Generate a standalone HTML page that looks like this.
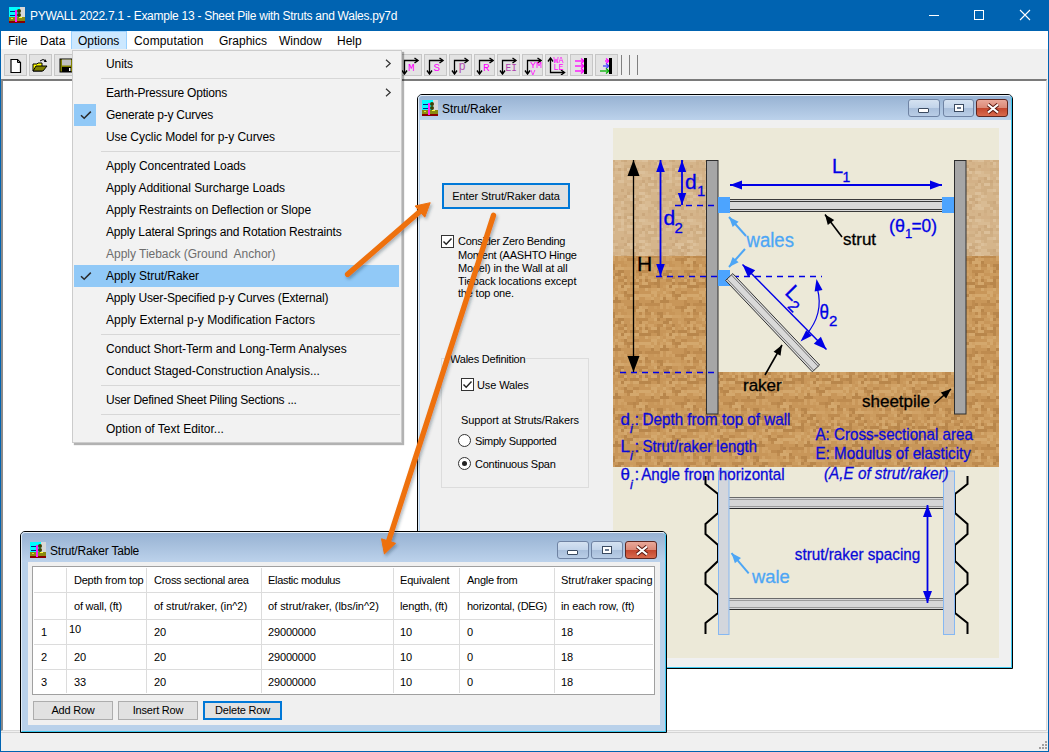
<!DOCTYPE html>
<html><head><meta charset="utf-8">
<style>
*{margin:0;padding:0;box-sizing:border-box}
html,body{width:1049px;height:752px;overflow:hidden;background:#F0F0F0;font-family:"Liberation Sans",sans-serif;color:#000}
.a{position:absolute}
.nw{white-space:nowrap}
#title{left:0;top:0;width:1049px;height:31px;background:#0063B1;color:#fff;font-size:12px}
#menubar{left:1px;top:31px;width:1047px;height:18px;background:#fff;font-size:12px}
#menubar span{position:absolute;top:3px;white-space:nowrap}
#toolbar{left:1px;top:49px;width:1047px;height:30px;background:#F0F0F0}
.tb{position:absolute;top:54px;width:23px;height:22px;border:1px solid #C6C6C6;background:#E3E3E3;overflow:hidden}
#mdi{left:1px;top:79px;width:1046px;height:652px;background:#fff;border-top:2px solid #7A7A7A;border-left:2px solid #8A8A8A;border-right:1px solid #DADADA;border-bottom:1px solid #DADADA}
#status{left:1px;top:732px;width:1047px;height:19px;background:#F0F0F0;border-top:1px solid #D4D4D4}
.win{position:absolute;border:1px solid #000;border-radius:5px 5px 0 0;background:#B9D1EA;overflow:hidden}
.wtitle{position:absolute;left:0;right:0;top:0;background:linear-gradient(#96B1D2,#BCD2EB);}
.wt{position:absolute;font-size:12px;color:#000;white-space:nowrap}
.wbtn{position:absolute;height:18px;border:1px solid #6F83A3;border-radius:3px;background:linear-gradient(#D5E2F1 0%,#C2D4EA 48%,#A9BFDB 52%,#B9CDE6 100%)}
.wclose{border-color:#5E2620;background:linear-gradient(#E9A89A 0%,#DC8A78 48%,#C4472E 52%,#D86A4E 100%)}
.menu{left:71px;top:50px;width:331px;height:393px;background:#F2F2F2;border:1px solid #CCCCCC;box-shadow:2px 2px 1px rgba(0,0,0,0.30);font-size:12px}
.mi{position:absolute;left:34px;height:22px;line-height:22px;white-space:nowrap;color:#000}
.sep{position:absolute;left:29px;width:297px;height:1px;background:#D7D7D7}
.dlg{font-size:11px}
.btn{position:absolute;background:#E1E1E1;border:1px solid #ADADAD;text-align:center;font-size:11px;white-space:nowrap}
.cb{position:absolute;width:13px;height:13px;border:1px solid #333;background:#fff}
.rb{position:absolute;width:13px;height:13px;border:1px solid #333;border-radius:50%;background:#fff}
.tbl td{}
</style></head><body>
<svg width="0" height="0" style="position:absolute">
<defs>
<symbol id="appicon" viewBox="0 0 16 16">
<rect x="0" y="0" width="16" height="16" fill="#C8C8C8"/>
<rect x="0" y="0" width="11" height="10" fill="#00FFFF"/>
<rect x="11" y="0" width="5" height="11" fill="#D8D8D8"/>
<rect x="1" y="4" width="6" height="1" fill="#00208A"/>
<rect x="1" y="8" width="6" height="1" fill="#00208A"/>
<rect x="0" y="10" width="16" height="4" fill="#8A8A10"/>
<rect x="2" y="11" width="2" height="1" fill="#E0E040"/>
<rect x="10" y="10" width="3" height="1" fill="#FFFF40"/>
<rect x="0" y="14" width="16" height="2" fill="#8A0000"/>
<circle cx="10" cy="4" r="2" fill="#404000"/>
<circle cx="10" cy="8" r="2" fill="#404000"/>
<rect x="6" y="3" width="2" height="12" fill="#FF20FF"/>
</symbol>
</defs>
</svg>
<div class="a" style="left:0;top:0;width:1049px;height:752px;background:#0063B1"></div>
<div class="a" style="left:1px;top:31px;width:1047px;height:720px;background:#F0F0F0"></div>
<div id="title" class="a">
  <svg class="a" style="left:9px;top:7px" width="16" height="16"><use href="#appicon"/></svg>
  <div class="a nw" style="left:30px;top:9px;letter-spacing:-0.27px">PYWALL 2022.7.1 - Example 13 - Sheet Pile with Struts and Wales.py7d</div>
  <div class="a" style="left:929px;top:15px;width:10px;height:1px;background:#fff"></div>
  <div class="a" style="left:974px;top:10px;width:10px;height:10px;border:1px solid #fff"></div>
  <svg class="a" style="left:1019px;top:9px" width="12" height="12"><path d="M1 1L11 11M11 1L1 11" stroke="#fff" stroke-width="1.1"/></svg>
</div>
<div id="menubar" class="a">
  <span style="left:7px">File</span>
  <span style="left:39px">Data</span>
  <div class="a" style="left:70px;top:0;width:56px;height:19px;background:#CCE8FF;border:1px solid #99D1FF"></div>
  <span style="left:77px">Options</span>
  <span style="left:133px;letter-spacing:0.15px">Computation</span>
  <span style="left:218px">Graphics</span>
  <span style="left:278px">Window</span>
  <span style="left:336px">Help</span>
</div>
<div id="toolbar" class="a"></div>
<div id="mdi" class="a"></div>
<div id="status" class="a">
  <svg class="a" style="left:1035px;top:7px" width="12" height="12">
    <rect x="9" y="1" width="2" height="2" fill="#A0A0A0"/>
    <rect x="6" y="4" width="2" height="2" fill="#A0A0A0"/><rect x="9" y="4" width="2" height="2" fill="#A0A0A0"/>
    <rect x="3" y="7" width="2" height="2" fill="#A0A0A0"/><rect x="6" y="7" width="2" height="2" fill="#A0A0A0"/><rect x="9" y="7" width="2" height="2" fill="#A0A0A0"/>
  </svg>
</div>
<div class="tb" style="left:4px;width:23px"><svg class="a" style="left:0;top:0" width="21" height="20"><path d="M6 4.5H12.5L15.5 7.5V17.5H6z" fill="#fff" stroke="#000" stroke-width="1.2"/><path d="M12.5 4.5V7.5H15.5" fill="none" stroke="#000" stroke-width="1"/></svg></div>
<div class="tb" style="left:29px;width:23px"><svg class="a" style="left:0;top:0" width="21" height="20"><path d="M3 9H7L8 8H12V16H3z" fill="#FFFF00" stroke="#000" stroke-width="1"/><path d="M3 16L6 11H17L13 16z" fill="#808000" stroke="#000" stroke-width="1"/><path d="M10 6Q13 3 16 6" fill="none" stroke="#000" stroke-width="1"/><path d="M15 4L17 7L14 7z" fill="#000"/></svg></div>
<div class="tb" style="left:54px;width:23px"><svg class="a" style="left:0;top:0" width="21" height="20"><rect x="5" y="4" width="13" height="13" fill="#808000" stroke="#000" stroke-width="1"/><rect x="7" y="4.5" width="9" height="6" fill="#C0C0C0"/><rect x="7" y="12" width="9" height="5" fill="#000"/><rect x="14" y="13" width="1.5" height="3" fill="#fff"/></svg></div>
<div class="tb" style="left:399px;width:23px"><svg class="a" style="left:0;top:0" width="21" height="20"><path d="M4.5 18.5V5.5H17.5" stroke="#000" stroke-width="1.3" fill="none"/><path d="M2 15.5L4.5 19L7 15.5" stroke="#000" stroke-width="1.4" fill="none"/><path d="M14.5 3L18 5.5L14.5 8" stroke="#000" stroke-width="1.4" fill="none"/><text x="8" y="15.5" font-family="Liberation Mono" font-size="11" fill="#FF00FF">M</text></svg></div>
<div class="tb" style="left:424px;width:23px"><svg class="a" style="left:0;top:0" width="21" height="20"><path d="M4.5 18.5V5.5H17.5" stroke="#000" stroke-width="1.3" fill="none"/><path d="M2 15.5L4.5 19L7 15.5" stroke="#000" stroke-width="1.4" fill="none"/><path d="M14.5 3L18 5.5L14.5 8" stroke="#000" stroke-width="1.4" fill="none"/><text x="8.5" y="15.5" font-family="Liberation Mono" font-size="11" fill="#FF00FF">S</text></svg></div>
<div class="tb" style="left:449px;width:23px"><svg class="a" style="left:0;top:0" width="21" height="20"><path d="M4.5 18.5V5.5H17.5" stroke="#000" stroke-width="1.3" fill="none"/><path d="M2 15.5L4.5 19L7 15.5" stroke="#000" stroke-width="1.4" fill="none"/><path d="M14.5 3L18 5.5L14.5 8" stroke="#000" stroke-width="1.4" fill="none"/><text x="8.5" y="15" font-family="Liberation Mono" font-size="12" fill="#B050B0">p</text></svg></div>
<div class="tb" style="left:474px;width:21px"><svg class="a" style="left:0;top:0" width="19" height="20"><path d="M4.5 18.5V5.5H17.5" stroke="#000" stroke-width="1.3" fill="none"/><path d="M2 15.5L4.5 19L7 15.5" stroke="#000" stroke-width="1.4" fill="none"/><path d="M14.5 3L18 5.5L14.5 8" stroke="#000" stroke-width="1.4" fill="none"/><text x="8" y="15.5" font-family="Liberation Mono" font-size="11" fill="#FF00FF">R</text></svg></div>
<div class="tb" style="left:497px;width:23px"><svg class="a" style="left:0;top:0" width="21" height="20"><path d="M4.5 18.5V5.5H17.5" stroke="#000" stroke-width="1.3" fill="none"/><path d="M2 15.5L4.5 19L7 15.5" stroke="#000" stroke-width="1.4" fill="none"/><path d="M14.5 3L18 5.5L14.5 8" stroke="#000" stroke-width="1.4" fill="none"/><text x="7.5" y="15.5" font-family="Liberation Mono" font-size="11" fill="#B040B0" textLength="11.5" lengthAdjust="spacingAndGlyphs">EI</text></svg></div>
<div class="tb" style="left:522px;width:21px"><svg class="a" style="left:0;top:0" width="19" height="20"><path d="M4.5 18.5V5.5H17.5" stroke="#000" stroke-width="1.3" fill="none"/><path d="M2 15.5L4.5 19L7 15.5" stroke="#000" stroke-width="1.4" fill="none"/><path d="M14.5 3L18 5.5L14.5 8" stroke="#000" stroke-width="1.4" fill="none"/><text x="7" y="13" font-family="Liberation Mono" font-size="9" fill="#FF00FF" textLength="12" lengthAdjust="spacingAndGlyphs">YM</text><text x="7.5" y="19.5" font-family="Liberation Mono" font-size="8" fill="#FF00FF">V</text></svg></div>
<div class="tb" style="left:545px;width:23px"><svg class="a" style="left:0;top:0" width="21" height="20"><path d="M4.5 3.5V17.5H18" stroke="#000" stroke-width="1.3" fill="none"/><path d="M2 6.5L4.5 3L7 6.5" stroke="#000" stroke-width="1.4" fill="none"/><path d="M15 15L18.5 17.5L15 20" stroke="#000" stroke-width="1.4" fill="none"/><text x="7.5" y="8" font-family="Liberation Mono" font-size="8.5" fill="#FF00FF" textLength="10" lengthAdjust="spacingAndGlyphs">WA</text><text x="7.5" y="15" font-family="Liberation Mono" font-size="8.5" fill="#FF00FF" textLength="10" lengthAdjust="spacingAndGlyphs">LE</text></svg></div>
<div class="tb" style="left:570px;width:23px"><svg class="a" style="left:0;top:0" width="21" height="20"><path d="M4 6H12" stroke="#FF00FF" stroke-width="1.3"/><path d="M10 3.5L13 6L10 8.5" fill="none" stroke="#FF00FF" stroke-width="1.2"/><path d="M4 11H12" stroke="#FF00FF" stroke-width="1.3"/><path d="M10 8.5L13 11L10 13.5" fill="none" stroke="#FF00FF" stroke-width="1.2"/><path d="M4 16H12" stroke="#FF00FF" stroke-width="1.3"/><path d="M10 13.5L13 16L10 18.5" fill="none" stroke="#FF00FF" stroke-width="1.2"/><rect x="13" y="3" width="3" height="16" fill="#000"/></svg></div>
<div class="tb" style="left:595px;width:23px"><svg class="a" style="left:0;top:0" width="21" height="20"><path d="M9 6H12" stroke="#FF00FF" stroke-width="1.3"/><path d="M10 3.5L13 6L10 8.5" fill="none" stroke="#FF00FF" stroke-width="1.2"/><path d="M7 11H12" stroke="#4040FF" stroke-width="1.3"/><path d="M10 8.5L13 11L10 13.5" fill="none" stroke="#4040FF" stroke-width="1.2"/><path d="M4 16H12" stroke="#00B000" stroke-width="1.3"/><path d="M10 13.5L13 16L10 18.5" fill="none" stroke="#00B000" stroke-width="1.2"/><rect x="13" y="3" width="3" height="16" fill="#000"/></svg></div>
<div class="a" style="left:621px;top:55px;width:1px;height:20px;background:#808080"></div>
<div class="a" style="left:629px;top:55px;width:1px;height:20px;background:#808080"></div>
<div class="a" style="left:637px;top:55px;width:1px;height:20px;background:#808080"></div>
<div class="win" style="left:417px;top:94px;width:596px;height:575px;border-radius:5px 5px 0 0">
<div class="wtitle" style="height:25px"></div>
<div class="a" style="left:0;top:0;right:0;bottom:0;border-right:1px solid #3CC8F0;border-bottom:1px solid #3CC8F0;border-radius:4px 4px 0 0;border-top:1px solid #E8F0F8;border-left:1px solid #E0ECF6"></div>
<svg class="a" style="left:4px;top:5px" width="16" height="16"><use href="#appicon"/></svg>
<div class="wt" style="left:24px;top:7px;letter-spacing:-0.1px">Strut/Raker</div>
<div class="wbtn " style="left:490px;top:4px;width:32px;height:18px"><div class="a" style="left:9px;top:8px;width:11px;height:5px;background:#fff;border:1px solid #3A4A60;border-radius:1px"></div></div>
<div class="wbtn " style="left:525px;top:4px;width:31px;height:18px"><div class="a" style="left:10px;top:4px;width:10px;height:8px;background:#fff;border:1px solid #3A4A60"></div><div class="a" style="left:13px;top:7px;width:4px;height:2px;background:#6A7A90"></div></div>
<div class="wbtn wclose" style="left:558px;top:4px;width:32px;height:18px"><svg class="a" style="left:9px;top:3px" width="14" height="11"><path d="M2 1.5L12 9.5M12 1.5L2 9.5" stroke="#5A1A12" stroke-width="4"/><path d="M2 1.5L12 9.5M12 1.5L2 9.5" stroke="#fff" stroke-width="2.2"/></svg></div>
<div class="a dlg" style="left:2px;top:25px;width:591px;height:547px;background:#F0F0F0;overflow:hidden">
<div class="btn" style="left:22px;top:63px;width:128px;height:26px;border:2px solid #0078D7;line-height:22px;background:#E1E1E1;letter-spacing:-0.084px">Enter Strut/Raker data</div>
<div class="cb" style="left:21px;top:115px"><svg class="a" style="left:0;top:0" width="11" height="11"><path d="M1.5 5.5L4.2 8.3L9.5 2.5" stroke="#222" stroke-width="1.4" fill="none"/></svg></div>
<div class="a nw" style="left:38px;top:115px;letter-spacing:-0.282px">Consider Zero Bending</div>
<div class="a nw" style="left:38px;top:129px;letter-spacing:-0.23px">Moment (AASHTO Hinge</div>
<div class="a nw" style="left:38px;top:142px;letter-spacing:-0.181px">Model) in the Wall at all</div>
<div class="a nw" style="left:38px;top:155px;letter-spacing:-0.069px">Tieback locations except</div>
<div class="a nw" style="left:38px;top:167px;letter-spacing:-0.192px">the top one.</div>
<div class="a" style="left:21px;top:238px;width:148px;height:130px;border:1px solid #DCDCDC"></div>
<div class="a nw" style="left:29px;top:233px;background:#F0F0F0;padding:0 1px;letter-spacing:-0.23px">Wales Definition</div>
<div class="cb" style="left:41px;top:258px"><svg class="a" style="left:0;top:0" width="11" height="11"><path d="M1.5 5.5L4.2 8.3L9.5 2.5" stroke="#222" stroke-width="1.4" fill="none"/></svg></div>
<div class="a nw" style="left:57px;top:259px;letter-spacing:-0.12px">Use Wales</div>
<div class="a nw" style="left:41px;top:294px;letter-spacing:-0.106px">Support at Struts/Rakers</div>
<div class="rb" style="left:38px;top:314px"></div>
<div class="a nw" style="left:55px;top:315px;letter-spacing:-0.346px">Simply Supported</div>
<div class="rb" style="left:38px;top:337px"><div class="a" style="left:3px;top:3px;width:5px;height:5px;border-radius:50%;background:#222"></div></div>
<div class="a nw" style="left:55px;top:338px;letter-spacing:-0.26px">Continuous Span</div>
</div>
</div>
<svg class="a" style="left:613px;top:128px" width="386" height="530" viewBox="613 128 386 530" font-family="Liberation Sans">
<defs>
<pattern id="sandL" width="48" height="48" patternUnits="userSpaceOnUse"><rect width="48" height="48" fill="#D5B58B"/><rect x="3" y="0" width="3" height="3" fill="#CBA87D"/><rect x="15" y="0" width="3" height="3" fill="#DCC09A"/><rect x="18" y="0" width="3" height="3" fill="#DCC09A"/><rect x="24" y="0" width="3" height="3" fill="#CFAE83"/><rect x="33" y="0" width="6" height="3" fill="#CFAE83"/><rect x="39" y="0" width="3" height="3" fill="#D3B187"/><rect x="0" y="3" width="3" height="3" fill="#CBA87D"/><rect x="3" y="3" width="6" height="3" fill="#DCC09A"/><rect x="9" y="3" width="3" height="3" fill="#DCC09A"/><rect x="12" y="3" width="6" height="3" fill="#CFAE83"/><rect x="21" y="3" width="3" height="3" fill="#DCC09A"/><rect x="24" y="3" width="3" height="3" fill="#D9BB93"/><rect x="36" y="3" width="6" height="3" fill="#D9BB93"/><rect x="42" y="3" width="6" height="3" fill="#D3B187"/><rect x="6" y="6" width="3" height="3" fill="#DCC09A"/><rect x="9" y="6" width="6" height="3" fill="#CBA87D"/><rect x="15" y="6" width="3" height="3" fill="#D9BB93"/><rect x="18" y="6" width="3" height="3" fill="#DCC09A"/><rect x="39" y="6" width="3" height="3" fill="#CBA87D"/><rect x="42" y="6" width="6" height="3" fill="#CFAE83"/><rect x="0" y="9" width="3" height="3" fill="#CFAE83"/><rect x="3" y="9" width="6" height="3" fill="#CFAE83"/><rect x="9" y="9" width="3" height="3" fill="#D9BB93"/><rect x="12" y="9" width="3" height="3" fill="#D3B187"/><rect x="15" y="9" width="3" height="3" fill="#CBA87D"/><rect x="21" y="9" width="6" height="3" fill="#D9BB93"/><rect x="27" y="9" width="6" height="3" fill="#CFAE83"/><rect x="33" y="9" width="3" height="3" fill="#CBA87D"/><rect x="36" y="9" width="3" height="3" fill="#D9BB93"/><rect x="45" y="9" width="3" height="3" fill="#DCC09A"/><rect x="6" y="12" width="3" height="3" fill="#CFAE83"/><rect x="9" y="12" width="3" height="3" fill="#CBA87D"/><rect x="12" y="12" width="3" height="3" fill="#D3B187"/><rect x="15" y="12" width="6" height="3" fill="#DCC09A"/><rect x="21" y="12" width="3" height="3" fill="#D9BB93"/><rect x="24" y="12" width="6" height="3" fill="#D9BB93"/><rect x="30" y="12" width="6" height="3" fill="#CFAE83"/><rect x="36" y="12" width="6" height="3" fill="#D3B187"/><rect x="45" y="12" width="3" height="3" fill="#D9BB93"/><rect x="0" y="15" width="3" height="3" fill="#CBA87D"/><rect x="9" y="15" width="3" height="3" fill="#CBA87D"/><rect x="12" y="15" width="6" height="3" fill="#D9BB93"/><rect x="18" y="15" width="6" height="3" fill="#DCC09A"/><rect x="24" y="15" width="6" height="3" fill="#D3B187"/><rect x="30" y="15" width="3" height="3" fill="#D9BB93"/><rect x="33" y="15" width="6" height="3" fill="#CFAE83"/><rect x="39" y="15" width="6" height="3" fill="#D9BB93"/><rect x="45" y="15" width="3" height="3" fill="#CFAE83"/><rect x="12" y="18" width="3" height="3" fill="#D3B187"/><rect x="24" y="18" width="3" height="3" fill="#CFAE83"/><rect x="30" y="18" width="3" height="3" fill="#CFAE83"/><rect x="33" y="18" width="3" height="3" fill="#DCC09A"/><rect x="39" y="18" width="3" height="3" fill="#D3B187"/><rect x="42" y="18" width="6" height="3" fill="#D9BB93"/><rect x="0" y="21" width="6" height="3" fill="#CFAE83"/><rect x="6" y="21" width="3" height="3" fill="#CBA87D"/><rect x="18" y="21" width="3" height="3" fill="#CBA87D"/><rect x="24" y="21" width="3" height="3" fill="#D3B187"/><rect x="33" y="21" width="3" height="3" fill="#D9BB93"/><rect x="39" y="21" width="3" height="3" fill="#DCC09A"/><rect x="42" y="21" width="3" height="3" fill="#DCC09A"/><rect x="45" y="21" width="3" height="3" fill="#D9BB93"/><rect x="0" y="24" width="3" height="3" fill="#CBA87D"/><rect x="3" y="24" width="6" height="3" fill="#DCC09A"/><rect x="9" y="24" width="6" height="3" fill="#CBA87D"/><rect x="21" y="24" width="3" height="3" fill="#D3B187"/><rect x="24" y="24" width="6" height="3" fill="#D3B187"/><rect x="30" y="24" width="6" height="3" fill="#CFAE83"/><rect x="36" y="24" width="3" height="3" fill="#CFAE83"/><rect x="42" y="24" width="3" height="3" fill="#CBA87D"/><rect x="3" y="27" width="3" height="3" fill="#CFAE83"/><rect x="9" y="27" width="3" height="3" fill="#DCC09A"/><rect x="15" y="27" width="3" height="3" fill="#DCC09A"/><rect x="18" y="27" width="3" height="3" fill="#DCC09A"/><rect x="21" y="27" width="3" height="3" fill="#D9BB93"/><rect x="30" y="27" width="3" height="3" fill="#D3B187"/><rect x="33" y="27" width="3" height="3" fill="#DCC09A"/><rect x="39" y="27" width="6" height="3" fill="#D9BB93"/><rect x="45" y="27" width="3" height="3" fill="#DCC09A"/><rect x="0" y="30" width="3" height="3" fill="#CFAE83"/><rect x="6" y="30" width="3" height="3" fill="#CFAE83"/><rect x="9" y="30" width="3" height="3" fill="#CFAE83"/><rect x="18" y="30" width="6" height="3" fill="#D9BB93"/><rect x="24" y="30" width="6" height="3" fill="#D9BB93"/><rect x="30" y="30" width="3" height="3" fill="#D3B187"/><rect x="45" y="30" width="3" height="3" fill="#DCC09A"/><rect x="3" y="33" width="6" height="3" fill="#DCC09A"/><rect x="9" y="33" width="3" height="3" fill="#D3B187"/><rect x="12" y="33" width="6" height="3" fill="#D9BB93"/><rect x="18" y="33" width="6" height="3" fill="#D3B187"/><rect x="24" y="33" width="3" height="3" fill="#CBA87D"/><rect x="27" y="33" width="3" height="3" fill="#DCC09A"/><rect x="33" y="33" width="3" height="3" fill="#D3B187"/><rect x="36" y="33" width="3" height="3" fill="#DCC09A"/><rect x="39" y="33" width="6" height="3" fill="#D3B187"/><rect x="45" y="33" width="3" height="3" fill="#D9BB93"/><rect x="6" y="36" width="6" height="3" fill="#D3B187"/><rect x="12" y="36" width="3" height="3" fill="#D3B187"/><rect x="15" y="36" width="3" height="3" fill="#D3B187"/><rect x="18" y="36" width="3" height="3" fill="#CBA87D"/><rect x="24" y="36" width="6" height="3" fill="#CFAE83"/><rect x="30" y="36" width="3" height="3" fill="#CBA87D"/><rect x="36" y="36" width="3" height="3" fill="#CFAE83"/><rect x="42" y="36" width="6" height="3" fill="#DCC09A"/><rect x="0" y="39" width="3" height="3" fill="#CFAE83"/><rect x="3" y="39" width="6" height="3" fill="#D9BB93"/><rect x="15" y="39" width="3" height="3" fill="#CFAE83"/><rect x="18" y="39" width="3" height="3" fill="#D9BB93"/><rect x="21" y="39" width="3" height="3" fill="#CFAE83"/><rect x="24" y="39" width="6" height="3" fill="#DCC09A"/><rect x="30" y="39" width="3" height="3" fill="#CFAE83"/><rect x="33" y="39" width="6" height="3" fill="#D9BB93"/><rect x="0" y="42" width="3" height="3" fill="#D3B187"/><rect x="3" y="42" width="6" height="3" fill="#D3B187"/><rect x="9" y="42" width="3" height="3" fill="#CFAE83"/><rect x="12" y="42" width="3" height="3" fill="#CFAE83"/><rect x="15" y="42" width="6" height="3" fill="#D9BB93"/><rect x="21" y="42" width="3" height="3" fill="#D3B187"/><rect x="24" y="42" width="6" height="3" fill="#CFAE83"/><rect x="30" y="42" width="3" height="3" fill="#CFAE83"/><rect x="3" y="45" width="6" height="3" fill="#CFAE83"/><rect x="15" y="45" width="6" height="3" fill="#D3B187"/><rect x="21" y="45" width="6" height="3" fill="#CFAE83"/><rect x="27" y="45" width="6" height="3" fill="#D9BB93"/><rect x="33" y="45" width="3" height="3" fill="#DCC09A"/><rect x="45" y="45" width="3" height="3" fill="#CBA87D"/></pattern>
<pattern id="sandD" width="48" height="48" patternUnits="userSpaceOnUse"><rect width="48" height="48" fill="#C89659"/><rect x="0" y="0" width="3" height="3" fill="#D4A86D"/><rect x="9" y="0" width="3" height="3" fill="#CC9C5F"/><rect x="12" y="0" width="3" height="3" fill="#CC9C5F"/><rect x="21" y="0" width="3" height="3" fill="#D4A86D"/><rect x="24" y="0" width="3" height="3" fill="#CC9C5F"/><rect x="27" y="0" width="6" height="3" fill="#D1A266"/><rect x="33" y="0" width="3" height="3" fill="#D4A86D"/><rect x="36" y="0" width="3" height="3" fill="#CC9C5F"/><rect x="42" y="0" width="6" height="3" fill="#D1A266"/><rect x="0" y="3" width="3" height="3" fill="#B8864B"/><rect x="3" y="3" width="6" height="3" fill="#CC9C5F"/><rect x="9" y="3" width="6" height="3" fill="#BE8B4F"/><rect x="27" y="3" width="6" height="3" fill="#D4A86D"/><rect x="33" y="3" width="3" height="3" fill="#CC9C5F"/><rect x="36" y="3" width="3" height="3" fill="#CC9C5F"/><rect x="39" y="3" width="3" height="3" fill="#D4A86D"/><rect x="42" y="3" width="3" height="3" fill="#CC9C5F"/><rect x="0" y="6" width="3" height="3" fill="#BE8B4F"/><rect x="3" y="6" width="6" height="3" fill="#B8864B"/><rect x="9" y="6" width="3" height="3" fill="#D4A86D"/><rect x="12" y="6" width="3" height="3" fill="#D1A266"/><rect x="15" y="6" width="6" height="3" fill="#D4A86D"/><rect x="21" y="6" width="6" height="3" fill="#D4A86D"/><rect x="27" y="6" width="3" height="3" fill="#CC9C5F"/><rect x="30" y="6" width="3" height="3" fill="#D4A86D"/><rect x="36" y="6" width="3" height="3" fill="#D1A266"/><rect x="39" y="6" width="3" height="3" fill="#CC9C5F"/><rect x="42" y="6" width="3" height="3" fill="#D4A86D"/><rect x="45" y="6" width="3" height="3" fill="#D4A86D"/><rect x="0" y="9" width="3" height="3" fill="#CC9C5F"/><rect x="3" y="9" width="3" height="3" fill="#BE8B4F"/><rect x="6" y="9" width="3" height="3" fill="#D4A86D"/><rect x="9" y="9" width="6" height="3" fill="#D4A86D"/><rect x="21" y="9" width="6" height="3" fill="#D1A266"/><rect x="27" y="9" width="3" height="3" fill="#D4A86D"/><rect x="30" y="9" width="6" height="3" fill="#CC9C5F"/><rect x="36" y="9" width="3" height="3" fill="#D4A86D"/><rect x="39" y="9" width="3" height="3" fill="#B8864B"/><rect x="42" y="9" width="6" height="3" fill="#D1A266"/><rect x="12" y="12" width="3" height="3" fill="#BE8B4F"/><rect x="27" y="12" width="3" height="3" fill="#B8864B"/><rect x="30" y="12" width="3" height="3" fill="#CC9C5F"/><rect x="33" y="12" width="3" height="3" fill="#CC9C5F"/><rect x="36" y="12" width="3" height="3" fill="#B8864B"/><rect x="39" y="12" width="6" height="3" fill="#B8864B"/><rect x="12" y="15" width="3" height="3" fill="#BE8B4F"/><rect x="15" y="15" width="3" height="3" fill="#B8864B"/><rect x="21" y="15" width="6" height="3" fill="#BE8B4F"/><rect x="27" y="15" width="6" height="3" fill="#BE8B4F"/><rect x="33" y="15" width="3" height="3" fill="#BE8B4F"/><rect x="36" y="15" width="3" height="3" fill="#D1A266"/><rect x="42" y="15" width="6" height="3" fill="#D1A266"/><rect x="0" y="18" width="3" height="3" fill="#D1A266"/><rect x="3" y="18" width="6" height="3" fill="#BE8B4F"/><rect x="9" y="18" width="3" height="3" fill="#B8864B"/><rect x="12" y="18" width="3" height="3" fill="#BE8B4F"/><rect x="15" y="18" width="3" height="3" fill="#D4A86D"/><rect x="18" y="18" width="6" height="3" fill="#D1A266"/><rect x="30" y="18" width="3" height="3" fill="#CC9C5F"/><rect x="36" y="18" width="3" height="3" fill="#D1A266"/><rect x="42" y="18" width="3" height="3" fill="#D1A266"/><rect x="45" y="18" width="3" height="3" fill="#CC9C5F"/><rect x="0" y="21" width="3" height="3" fill="#CC9C5F"/><rect x="3" y="21" width="6" height="3" fill="#CC9C5F"/><rect x="9" y="21" width="3" height="3" fill="#BE8B4F"/><rect x="12" y="21" width="3" height="3" fill="#D4A86D"/><rect x="15" y="21" width="6" height="3" fill="#D4A86D"/><rect x="21" y="21" width="3" height="3" fill="#B8864B"/><rect x="3" y="24" width="6" height="3" fill="#CC9C5F"/><rect x="12" y="24" width="3" height="3" fill="#CC9C5F"/><rect x="15" y="24" width="3" height="3" fill="#BE8B4F"/><rect x="18" y="24" width="3" height="3" fill="#D1A266"/><rect x="21" y="24" width="6" height="3" fill="#BE8B4F"/><rect x="27" y="24" width="3" height="3" fill="#D4A86D"/><rect x="33" y="24" width="6" height="3" fill="#B8864B"/><rect x="42" y="24" width="3" height="3" fill="#D1A266"/><rect x="0" y="27" width="3" height="3" fill="#D1A266"/><rect x="3" y="27" width="6" height="3" fill="#D1A266"/><rect x="9" y="27" width="6" height="3" fill="#CC9C5F"/><rect x="15" y="27" width="3" height="3" fill="#D1A266"/><rect x="18" y="27" width="3" height="3" fill="#D4A86D"/><rect x="27" y="27" width="3" height="3" fill="#D1A266"/><rect x="30" y="27" width="3" height="3" fill="#D1A266"/><rect x="36" y="27" width="3" height="3" fill="#B8864B"/><rect x="39" y="27" width="6" height="3" fill="#D4A86D"/><rect x="45" y="27" width="3" height="3" fill="#D4A86D"/><rect x="6" y="30" width="6" height="3" fill="#CC9C5F"/><rect x="12" y="30" width="6" height="3" fill="#BE8B4F"/><rect x="18" y="30" width="6" height="3" fill="#BE8B4F"/><rect x="24" y="30" width="6" height="3" fill="#CC9C5F"/><rect x="30" y="30" width="3" height="3" fill="#D4A86D"/><rect x="33" y="30" width="3" height="3" fill="#B8864B"/><rect x="42" y="30" width="6" height="3" fill="#B8864B"/><rect x="6" y="33" width="3" height="3" fill="#D1A266"/><rect x="9" y="33" width="3" height="3" fill="#CC9C5F"/><rect x="15" y="33" width="3" height="3" fill="#B8864B"/><rect x="18" y="33" width="6" height="3" fill="#D1A266"/><rect x="30" y="33" width="6" height="3" fill="#CC9C5F"/><rect x="36" y="33" width="3" height="3" fill="#CC9C5F"/><rect x="39" y="33" width="6" height="3" fill="#B8864B"/><rect x="45" y="33" width="3" height="3" fill="#D4A86D"/><rect x="0" y="36" width="3" height="3" fill="#B8864B"/><rect x="9" y="36" width="3" height="3" fill="#D1A266"/><rect x="15" y="36" width="3" height="3" fill="#D1A266"/><rect x="18" y="36" width="3" height="3" fill="#D4A86D"/><rect x="24" y="36" width="3" height="3" fill="#D1A266"/><rect x="27" y="36" width="3" height="3" fill="#D1A266"/><rect x="33" y="36" width="3" height="3" fill="#BE8B4F"/><rect x="36" y="36" width="3" height="3" fill="#BE8B4F"/><rect x="39" y="36" width="3" height="3" fill="#D4A86D"/><rect x="0" y="39" width="3" height="3" fill="#D4A86D"/><rect x="6" y="39" width="3" height="3" fill="#CC9C5F"/><rect x="12" y="39" width="3" height="3" fill="#D4A86D"/><rect x="15" y="39" width="3" height="3" fill="#BE8B4F"/><rect x="18" y="39" width="3" height="3" fill="#D1A266"/><rect x="21" y="39" width="3" height="3" fill="#B8864B"/><rect x="27" y="39" width="6" height="3" fill="#D4A86D"/><rect x="33" y="39" width="3" height="3" fill="#B8864B"/><rect x="36" y="39" width="6" height="3" fill="#CC9C5F"/><rect x="42" y="39" width="6" height="3" fill="#BE8B4F"/><rect x="0" y="42" width="3" height="3" fill="#B8864B"/><rect x="6" y="42" width="3" height="3" fill="#B8864B"/><rect x="9" y="42" width="6" height="3" fill="#B8864B"/><rect x="18" y="42" width="6" height="3" fill="#D4A86D"/><rect x="24" y="42" width="6" height="3" fill="#BE8B4F"/><rect x="30" y="42" width="6" height="3" fill="#B8864B"/><rect x="42" y="42" width="6" height="3" fill="#CC9C5F"/><rect x="0" y="45" width="6" height="3" fill="#D4A86D"/><rect x="6" y="45" width="3" height="3" fill="#CC9C5F"/><rect x="9" y="45" width="6" height="3" fill="#D4A86D"/><rect x="15" y="45" width="6" height="3" fill="#B8864B"/><rect x="21" y="45" width="6" height="3" fill="#B8864B"/><rect x="33" y="45" width="3" height="3" fill="#B8864B"/><rect x="39" y="45" width="3" height="3" fill="#CC9C5F"/><rect x="42" y="45" width="3" height="3" fill="#D4A86D"/><rect x="45" y="45" width="3" height="3" fill="#B8864B"/></pattern>
<marker id="ah" viewBox="0 0 10 10" refX="10" refY="5" markerWidth="10" markerHeight="10" markerUnits="userSpaceOnUse" orient="auto-start-reverse"><path d="M0 0L10 5L0 10z" fill="context-stroke"/></marker>
</defs>
<rect x="613" y="128" width="386" height="530" fill="#ECE9D8"/>
<rect x="613" y="160" width="93" height="96" fill="url(#sandL)"/>
<rect x="966" y="160" width="33" height="96" fill="url(#sandL)"/>
<rect x="613" y="256" width="93" height="211" fill="url(#sandD)"/>
<rect x="966" y="256" width="33" height="211" fill="url(#sandD)"/>
<rect x="706" y="372" width="260" height="95" fill="url(#sandD)"/>
<rect x="706.5" y="160.5" width="11.5" height="253.5" fill="#A6A6A6" stroke="#2E2E2E" stroke-width="1"/>
<rect x="954.5" y="160.5" width="11.5" height="253.5" fill="#A6A6A6" stroke="#2E2E2E" stroke-width="1"/>
<line x1="675" y1="205.5" x2="718" y2="205.5" stroke="#0000E6" stroke-width="1.4" stroke-dasharray="6,5"/>
<line x1="656" y1="276.5" x2="822" y2="276.5" stroke="#0000E6" stroke-width="1.4" stroke-dasharray="6,5"/>
<line x1="620" y1="372.5" x2="718" y2="372.5" stroke="#0000E6" stroke-width="1.4" stroke-dasharray="6,5"/>
<line x1="633.5" y1="160" x2="633.5" y2="372" stroke="#000" stroke-width="1.3"/><path d="M633.5 372.0L627.5 356.0L639.5 356.0z" fill="#000"/><path d="M633.5 160.0L639.5 176.0L627.5 176.0z" fill="#000"/>
<line x1="660.5" y1="160" x2="660.5" y2="276" stroke="#0000E6" stroke-width="1.8"/><path d="M660.5 276.0L656.2 264.0L664.8 264.0z" fill="#0000E6"/><path d="M660.5 160.0L664.8 172.0L656.2 172.0z" fill="#0000E6"/>
<line x1="682" y1="160" x2="682" y2="205" stroke="#0000E6" stroke-width="1.8"/><path d="M682.0 205.0L677.8 193.0L686.2 193.0z" fill="#0000E6"/><path d="M682.0 160.0L686.2 172.0L677.8 172.0z" fill="#0000E6"/>
<rect x="730" y="199" width="212" height="13" fill="#D9D9D9"/><line x1="730" y1="199.5" x2="942" y2="199.5" stroke="#3A3A3A" stroke-width="1"/><line x1="730" y1="201.5" x2="942" y2="201.5" stroke="#3A3A3A" stroke-width="1"/><line x1="730" y1="209.5" x2="942" y2="209.5" stroke="#3A3A3A" stroke-width="1"/><line x1="730" y1="211.5" x2="942" y2="211.5" stroke="#3A3A3A" stroke-width="1"/>
<rect x="718" y="197" width="12" height="16" fill="#4CA4FF"/>
<rect x="942" y="197" width="12" height="16" fill="#4CA4FF"/>
<rect x="718" y="270" width="12" height="16" fill="#4CA4FF"/>
<path d="M725.6 280.4L812.3 371.8L819.6 365.0L732.8 273.6z" fill="#D9D9D9" stroke="#333" stroke-width="1"/>
<line x1="727.0" y1="279.1" x2="813.8" y2="370.5" stroke="#555" stroke-width="0.8"/>
<line x1="731.4" y1="274.9" x2="818.1" y2="366.3" stroke="#555" stroke-width="0.8"/>
<line x1="730" y1="185" x2="942" y2="185" stroke="#0000E6" stroke-width="1.8"/><path d="M942.0 185.0L930.0 189.5L930.0 180.5z" fill="#0000E6"/><path d="M730.0 185.0L742.0 180.5L742.0 189.5z" fill="#0000E6"/>
<line x1="742.5" y1="264.5" x2="826.5" y2="349.5" stroke="#0000E6" stroke-width="1.5"/><path d="M826.5 349.5L813.8 343.8L820.9 336.7z" fill="#0000E6"/><path d="M742.5 264.5L755.2 270.2L748.1 277.3z" fill="#0000E6"/>
<path d="M817.5 289 Q 824 314 806 335" fill="none" stroke="#0000E6" stroke-width="1.2"/>
<path d="M816.5 279.0L822.5 290.1L814.6 291.5z" fill="#0000E6"/>
<path d="M800.5 341.5L806.2 330.2L811.8 335.8z" fill="#0000E6"/>
<line x1="746" y1="236" x2="729" y2="217" stroke="#4DA6F5" stroke-width="2"/><path d="M729.0 217.0L738.6 221.8L732.7 227.1z" fill="#4DA6F5"/>
<line x1="745" y1="249" x2="729" y2="267" stroke="#4DA6F5" stroke-width="2"/><path d="M729.0 267.0L732.7 256.9L738.6 262.2z" fill="#4DA6F5"/>
<line x1="842" y1="237" x2="825" y2="214.5" stroke="#000" stroke-width="1.6"/><path d="M825.0 214.5L834.2 220.1L827.8 224.9z" fill="#000"/>
<line x1="765" y1="375" x2="782" y2="345" stroke="#000" stroke-width="1.6"/><path d="M782.0 345.0L780.5 355.7L773.6 351.7z" fill="#000"/>
<line x1="934.5" y1="403.5" x2="951" y2="389" stroke="#000" stroke-width="1.6"/><path d="M951.0 389.0L946.1 398.6L940.8 392.6z" fill="#000"/>
<path d="M705.5 476L705.5 484L718 494L718 513L705.5 524L705.5 534L718 545L718 561L705.5 573L705.5 584L718 595L718 613L705.5 623L705.5 634" fill="none" stroke="#000" stroke-width="2"/>
<path d="M967.5 476L967.5 484L955 494L955 513L967.5 524L967.5 534L955 545L955 561L967.5 573L967.5 584L955 595L955 613L967.5 623L967.5 634" fill="none" stroke="#000" stroke-width="2"/>
<rect x="729" y="497" width="215" height="12" fill="#D6D6D6"/>
<line x1="729" y1="497.5" x2="944" y2="497.5" stroke="#6A6A6A" stroke-width="1"/>
<line x1="729" y1="499.5" x2="944" y2="499.5" stroke="#9A9A9A" stroke-width="1"/>
<line x1="729" y1="506.5" x2="944" y2="506.5" stroke="#9A9A9A" stroke-width="1"/>
<line x1="729" y1="508.5" x2="944" y2="508.5" stroke="#2A2A2A" stroke-width="1.2"/>
<rect x="729" y="598" width="215" height="12" fill="#D6D6D6"/>
<line x1="729" y1="598.5" x2="944" y2="598.5" stroke="#6A6A6A" stroke-width="1"/>
<line x1="729" y1="600.5" x2="944" y2="600.5" stroke="#9A9A9A" stroke-width="1"/>
<line x1="729" y1="607.5" x2="944" y2="607.5" stroke="#9A9A9A" stroke-width="1"/>
<line x1="729" y1="609.5" x2="944" y2="609.5" stroke="#2A2A2A" stroke-width="1.2"/>
<rect x="718.5" y="471" width="10.5" height="163.5" fill="#D3D6DC" stroke="#86B8F2" stroke-width="1"/>
<rect x="943.5" y="471" width="11" height="163.5" fill="#D3D6DC" stroke="#86B8F2" stroke-width="1"/>
<line x1="927.5" y1="505" x2="927.5" y2="603" stroke="#0000E6" stroke-width="1.8"/><path d="M927.5 603.0L923.0 591.0L932.0 591.0z" fill="#0000E6"/><path d="M927.5 505.0L932.0 517.0L923.0 517.0z" fill="#0000E6"/>
<text x="794.8" y="559.6" font-size="17" fill="#0A0AD8" stroke="#0A0AD8" stroke-width="0.3" textLength="125.5" lengthAdjust="spacingAndGlyphs" >strut/raker spacing</text>
<text x="752" y="583.2" font-size="19" fill="#4DA6F5" stroke="#4DA6F5" stroke-width="0.3" textLength="37.8" lengthAdjust="spacingAndGlyphs" >wale</text>
<line x1="748.7" y1="573.3" x2="731.5" y2="553.1" stroke="#4DA6F5" stroke-width="2"/><path d="M731.5 553.1L741.0 558.1L734.9 563.3z" fill="#4DA6F5"/>
<text x="685" y="188.5" font-size="21" fill="#0000E6" stroke="#0000E6" stroke-width="0.3" >d</text>
<text x="697" y="196" font-size="15" fill="#0000E6" stroke="#0000E6" stroke-width="0.3" >1</text>
<text x="663.5" y="225" font-size="21" fill="#0000E6" stroke="#0000E6" stroke-width="0.3" >d</text>
<text x="674.5" y="232.5" font-size="15" fill="#0000E6" stroke="#0000E6" stroke-width="0.3" >2</text>
<text x="637" y="270.8" font-size="21" fill="#000" stroke="#000" stroke-width="0.3" >H</text>
<text x="832" y="173.4" font-size="20" fill="#0000E6" stroke="#0000E6" stroke-width="0.3" >L</text>
<text x="842.5" y="182" font-size="14" fill="#0000E6" stroke="#0000E6" stroke-width="0.3" >1</text>
<text x="889" y="232" font-size="19" fill="#0000E6" stroke="#0000E6" stroke-width="0.3" textLength="16" lengthAdjust="spacingAndGlyphs" >(θ</text>
<text x="905" y="238" font-size="13" fill="#0000E6" stroke="#0000E6" stroke-width="0.3" >1</text>
<text x="911.5" y="232" font-size="19" fill="#0000E6" stroke="#0000E6" stroke-width="0.3" textLength="25.5" lengthAdjust="spacingAndGlyphs" >=0)</text>
<text x="843" y="245.2" font-size="17" fill="#000" stroke="#000" stroke-width="0.3" >strut</text>
<text x="746.5" y="247.3" font-size="19.5" fill="#4DA6F5" stroke="#4DA6F5" stroke-width="0.3" textLength="47.4" lengthAdjust="spacingAndGlyphs" >wales</text>
<text x="743" y="391.2" font-size="17" fill="#000" stroke="#000" stroke-width="0.3" >raker</text>
<text x="862" y="406.7" font-size="17" fill="#000" stroke="#000" stroke-width="0.3" >sheetpile</text>
<g transform="translate(786,295) rotate(45)" stroke="#0000E6" stroke-width="0.5"><text x="-2.5" y="0.5" font-size="21" fill="#0000E6" stroke="#0000E6" stroke-width="0.3" >L</text><text x="9" y="8" font-size="16" fill="#0000E6" stroke="#0000E6" stroke-width="0.3" >2</text></g>
<text x="819.5" y="319" font-size="20" fill="#0000E6" stroke="#0000E6" stroke-width="0.3" textLength="9.5" lengthAdjust="spacingAndGlyphs" >θ</text>
<text x="829" y="326" font-size="15" fill="#0000E6" stroke="#0000E6" stroke-width="0.3" >2</text>
<text x="620.5" y="425" font-size="17" fill="#0A0AD8" stroke="#0A0AD8" stroke-width="0.3" >d</text>
<text x="630" y="433" font-size="13" fill="#0A0AD8" stroke="#0A0AD8" stroke-width="0.3" font-style="italic">i</text>
<text x="634.5" y="425" font-size="17" fill="#0A0AD8" stroke="#0A0AD8" stroke-width="0.3" >:</text>
<text x="642.5" y="425" font-size="17" fill="#0A0AD8" stroke="#0A0AD8" stroke-width="0.3" textLength="148" lengthAdjust="spacingAndGlyphs" >Depth from top of wall</text>
<text x="620.5" y="451.7" font-size="17" fill="#0A0AD8" stroke="#0A0AD8" stroke-width="0.3" >L</text>
<text x="630" y="460" font-size="13" fill="#0A0AD8" stroke="#0A0AD8" stroke-width="0.3" font-style="italic">i</text>
<text x="634.5" y="451.7" font-size="17" fill="#0A0AD8" stroke="#0A0AD8" stroke-width="0.3" >:</text>
<text x="642.5" y="451.7" font-size="17" fill="#0A0AD8" stroke="#0A0AD8" stroke-width="0.3" textLength="114.5" lengthAdjust="spacingAndGlyphs" >Strut/raker length</text>
<text x="620.5" y="480.3" font-size="17" fill="#0A0AD8" stroke="#0A0AD8" stroke-width="0.3" >θ</text>
<text x="630" y="488.5" font-size="13" fill="#0A0AD8" stroke="#0A0AD8" stroke-width="0.3" font-style="italic">i</text>
<text x="634.5" y="480.3" font-size="17" fill="#0A0AD8" stroke="#0A0AD8" stroke-width="0.3" >:</text>
<text x="641.2" y="480.3" font-size="17" fill="#0A0AD8" stroke="#0A0AD8" stroke-width="0.3" textLength="143.4" lengthAdjust="spacingAndGlyphs" >Angle from horizontal</text>
<text x="815.5" y="439.7" font-size="17" fill="#0A0AD8" stroke="#0A0AD8" stroke-width="0.3" textLength="157.3" lengthAdjust="spacingAndGlyphs" >A: Cross-sectional area</text>
<text x="815.5" y="459.3" font-size="17" fill="#0A0AD8" stroke="#0A0AD8" stroke-width="0.3" textLength="155.4" lengthAdjust="spacingAndGlyphs" >E: Modulus of elasticity</text>
<text x="824" y="479.1" font-size="17" fill="#0A0AD8" stroke="#0A0AD8" stroke-width="0.3" textLength="124.6" lengthAdjust="spacingAndGlyphs" font-style="italic">(A,E of strut/raker)</text>
</svg>
<div class="win" style="left:20px;top:531px;width:647px;height:202px">
<div class="wtitle" style="height:30px"></div>
<div class="a" style="left:0;top:0;right:0;bottom:0;border-right:1px solid #3CC8F0;border-bottom:1px solid #3CC8F0;border-top:1px solid #E8F0F8;border-left:1px solid #E0ECF6;border-radius:4px 4px 0 0"></div>
<svg class="a" style="left:9px;top:10px" width="16" height="16"><use href="#appicon"/></svg>
<div class="wt" style="left:29px;top:12px;letter-spacing:-0.2px">Strut/Raker Table</div>
<div class="wbtn " style="left:536px;top:9px;width:32px;height:18px"><div class="a" style="left:9px;top:8px;width:11px;height:5px;background:#fff;border:1px solid #3A4A60;border-radius:1px"></div></div>
<div class="wbtn " style="left:570px;top:9px;width:32px;height:18px"><div class="a" style="left:10px;top:4px;width:10px;height:8px;background:#fff;border:1px solid #3A4A60"></div><div class="a" style="left:13px;top:7px;width:4px;height:2px;background:#6A7A90"></div></div>
<div class="wbtn wclose" style="left:604px;top:9px;width:32px;height:18px"><svg class="a" style="left:9px;top:3px" width="14" height="11"><path d="M2 1.5L12 9.5M12 1.5L2 9.5" stroke="#5A1A12" stroke-width="4"/><path d="M2 1.5L12 9.5M12 1.5L2 9.5" stroke="#fff" stroke-width="2.2"/></svg></div>
<div class="a dlg" style="left:7px;top:30px;width:632px;height:163px;background:#F0F0F0;overflow:hidden">
<div class="a" style="left:4px;top:4px;width:623px;height:129px;background:#fff;border:1px solid #A0A0A0"></div>
<div class="a" style="left:38px;top:6px;width:1px;height:125px;background:#DCDCDC"></div>
<div class="a" style="left:118px;top:6px;width:1px;height:125px;background:#DCDCDC"></div>
<div class="a" style="left:233px;top:6px;width:1px;height:125px;background:#DCDCDC"></div>
<div class="a" style="left:365px;top:6px;width:1px;height:125px;background:#DCDCDC"></div>
<div class="a" style="left:431px;top:6px;width:1px;height:125px;background:#DCDCDC"></div>
<div class="a" style="left:526px;top:6px;width:1px;height:125px;background:#DCDCDC"></div>
<div class="a" style="left:6px;top:30px;width:619px;height:1px;background:#DCDCDC"></div>
<div class="a" style="left:6px;top:57px;width:619px;height:1px;background:#DCDCDC"></div>
<div class="a" style="left:6px;top:82px;width:619px;height:1px;background:#DCDCDC"></div>
<div class="a" style="left:6px;top:107px;width:619px;height:1px;background:#DCDCDC"></div>
<div class="a nw" style="left:46px;top:12px;letter-spacing:-0.233px">Depth from top</div>
<div class="a nw" style="left:46px;top:38px;letter-spacing:-0.218px">of wall, (ft)</div>
<div class="a nw" style="left:126px;top:12px;letter-spacing:-0.279px">Cross sectional area</div>
<div class="a nw" style="left:126px;top:38px;letter-spacing:-0.065px">of strut/raker, (in^2)</div>
<div class="a nw" style="left:240px;top:12px;letter-spacing:-0.316px">Elastic modulus</div>
<div class="a nw" style="left:240px;top:38px;letter-spacing:-0.028px">of strut/raker, (lbs/in^2)</div>
<div class="a nw" style="left:372px;top:12px;letter-spacing:-0.188px">Equivalent</div>
<div class="a nw" style="left:372px;top:38px;letter-spacing:-0.178px">length, (ft)</div>
<div class="a nw" style="left:439px;top:12px;letter-spacing:-0.28px">Angle from</div>
<div class="a nw" style="left:439px;top:38px;letter-spacing:-0.293px">horizontal, (DEG)</div>
<div class="a nw" style="left:533px;top:12px;letter-spacing:-0.044px">Strut/raker spacing</div>
<div class="a nw" style="left:533px;top:38px;letter-spacing:-0.106px">in each row, (ft)</div>
<div class="a nw" style="left:13px;top:64px;letter-spacing:-0.2px">1</div>
<div class="a nw" style="left:41px;top:61px;letter-spacing:-0.2px">10</div>
<div class="a nw" style="left:126px;top:64px;letter-spacing:-0.2px">20</div>
<div class="a nw" style="left:240px;top:64px;letter-spacing:-0.157px">29000000</div>
<div class="a nw" style="left:372px;top:64px;letter-spacing:-0.2px">10</div>
<div class="a nw" style="left:439px;top:64px;letter-spacing:-0.2px">0</div>
<div class="a nw" style="left:533px;top:64px;letter-spacing:-0.2px">18</div>
<div class="a nw" style="left:13px;top:89px;letter-spacing:-0.2px">2</div>
<div class="a nw" style="left:46px;top:89px;letter-spacing:-0.2px">20</div>
<div class="a nw" style="left:126px;top:89px;letter-spacing:-0.2px">20</div>
<div class="a nw" style="left:240px;top:89px;letter-spacing:-0.157px">29000000</div>
<div class="a nw" style="left:372px;top:89px;letter-spacing:-0.2px">10</div>
<div class="a nw" style="left:439px;top:89px;letter-spacing:-0.2px">0</div>
<div class="a nw" style="left:533px;top:89px;letter-spacing:-0.2px">18</div>
<div class="a nw" style="left:13px;top:114px;letter-spacing:-0.2px">3</div>
<div class="a nw" style="left:46px;top:114px;letter-spacing:-0.2px">33</div>
<div class="a nw" style="left:126px;top:114px;letter-spacing:-0.2px">20</div>
<div class="a nw" style="left:240px;top:114px;letter-spacing:-0.157px">29000000</div>
<div class="a nw" style="left:372px;top:114px;letter-spacing:-0.2px">10</div>
<div class="a nw" style="left:439px;top:114px;letter-spacing:-0.2px">0</div>
<div class="a nw" style="left:533px;top:114px;letter-spacing:-0.2px">18</div>
<div class="btn" style="left:5px;top:139px;width:80px;height:19px;border:1px solid #ADADAD;line-height:17px;letter-spacing:-0.2px">Add Row</div>
<div class="btn" style="left:90px;top:139px;width:80px;height:19px;border:1px solid #ADADAD;line-height:17px;letter-spacing:-0.2px">Insert Row</div>
<div class="btn" style="left:175px;top:139px;width:79px;height:19px;border:2px solid #0078D7;line-height:15px;letter-spacing:-0.2px">Delete Row</div>
</div></div>
<div class="a menu" style="left:72px;top:50px;width:330px;height:393px">
<div class="mi" style="left:33px;top:2px;color:#000;letter-spacing:-0.089px">Units</div>
<svg class="a" style="left:312px;top:8px" width="7" height="9"><path d="M1 0.8L5.2 4.5L1 8.2" stroke="#333" stroke-width="1.2" fill="none"/></svg>
<div class="sep" style="left:28px;top:27px;width:299px"></div>
<div class="mi" style="left:33px;top:31px;color:#000;letter-spacing:-0.200px">Earth-Pressure Options</div>
<svg class="a" style="left:312px;top:37px" width="7" height="9"><path d="M1 0.8L5.2 4.5L1 8.2" stroke="#333" stroke-width="1.2" fill="none"/></svg>
<div class="a" style="left:1px;top:53px;width:22px;height:22px;background:#91C9F7"></div>
<svg class="a" style="left:6px;top:58px" width="14" height="12"><path d="M2 6.2L5.2 9.3L11.8 2.6" stroke="#2B2B2B" stroke-width="1.5" fill="none"/></svg>
<div class="mi" style="left:33px;top:53px;color:#000;letter-spacing:-0.231px">Generate p-y Curves</div>
<div class="mi" style="left:33px;top:75px;color:#000;letter-spacing:-0.077px">Use Cyclic Model for p-y Curves</div>
<div class="sep" style="left:28px;top:100px;width:299px"></div>
<div class="mi" style="left:33px;top:104px;color:#000;letter-spacing:-0.068px">Apply Concentrated Loads</div>
<div class="mi" style="left:33px;top:126px;color:#000;letter-spacing:-0.035px">Apply Additional Surcharge Loads</div>
<div class="mi" style="left:33px;top:148px;color:#000;letter-spacing:-0.097px">Apply Restraints on Deflection or Slope</div>
<div class="mi" style="left:33px;top:170px;color:#000;letter-spacing:-0.163px">Apply Lateral Springs and Rotation Restraints</div>
<div class="mi" style="left:33px;top:192px;color:#6D6D6D;letter-spacing:-0.020px">Apply Tieback (Ground&nbsp; Anchor)</div>
<div class="a" style="left:1px;top:214px;width:325px;height:22px;background:#91C9F7"></div>
<svg class="a" style="left:6px;top:219px" width="14" height="12"><path d="M2 6.2L5.2 9.3L11.8 2.6" stroke="#2B2B2B" stroke-width="1.5" fill="none"/></svg>
<div class="mi" style="left:33px;top:214px;color:#000;letter-spacing:-0.062px">Apply Strut/Raker</div>
<div class="mi" style="left:33px;top:236px;color:#000;letter-spacing:-0.154px">Apply User-Specified p-y Curves (External)</div>
<div class="mi" style="left:33px;top:258px;color:#000;letter-spacing:0.026px">Apply External p-y Modification Factors</div>
<div class="sep" style="left:28px;top:283px;width:299px"></div>
<div class="mi" style="left:33px;top:287px;color:#000;letter-spacing:-0.051px">Conduct Short-Term and Long-Term Analyses</div>
<div class="mi" style="left:33px;top:309px;color:#000;letter-spacing:-0.023px">Conduct Staged-Construction Analysis...</div>
<div class="sep" style="left:28px;top:334px;width:299px"></div>
<div class="mi" style="left:33px;top:338px;color:#000;letter-spacing:-0.248px">User Defined Sheet Piling Sections ...</div>
<div class="sep" style="left:28px;top:363px;width:299px"></div>
<div class="mi" style="left:33px;top:367px;color:#000;letter-spacing:-0.002px">Option of Text Editor...</div>
</div>
<svg class="a" style="left:0;top:0" width="1049" height="752">
<filter id="sh" x="-10%" y="-10%" width="130%" height="130%"><feDropShadow dx="1.5" dy="2" stdDeviation="1.5" flood-color="#203040" flood-opacity="0.35"/></filter>
<g filter="url(#sh)">
<line x1="347.6" y1="274.4" x2="421.4" y2="210.3" stroke="#EE7110" stroke-width="5.4" stroke-linecap="round"/><path d="M430.2 202.7L424.8 217.2L415.1 206.0z" fill="#EE7110" stroke="#EE7110" stroke-width="1" stroke-linejoin="round"/>
<line x1="493.5" y1="215.3" x2="388.0" y2="543.0" stroke="#EE7110" stroke-width="5.4" stroke-linecap="round"/><path d="M384.4 554L381.5 538.8L395.6 543.3z" fill="#EE7110" stroke="#EE7110" stroke-width="1" stroke-linejoin="round"/>
</g></svg>
</body></html>
